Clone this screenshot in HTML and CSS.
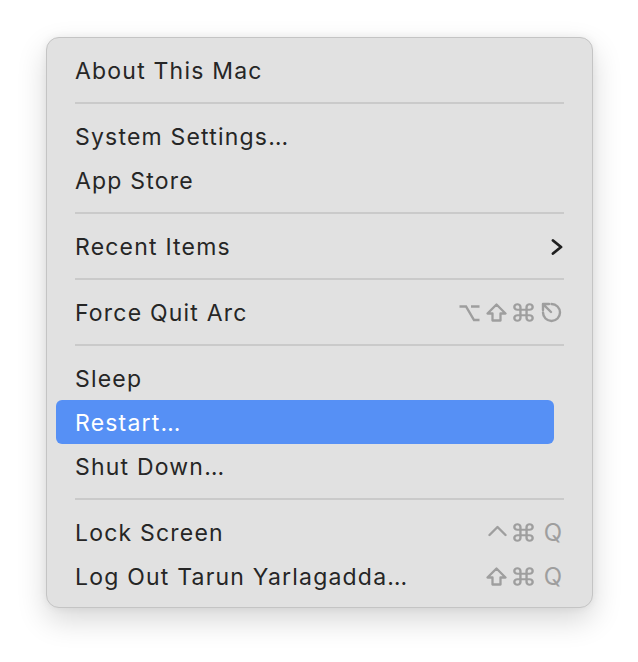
FILE: index.html
```html
<!DOCTYPE html>
<html lang="en">
<head>
<meta charset="utf-8">
<title>Apple Menu</title>
<link rel="stylesheet" href="styles.css">
</head>
<body>
<div class="menu">
  <div class="item">About This Mac</div>
  <div class="sep"></div>
  <div class="item">System Settings…</div>
  <div class="item">App Store</div>
  <div class="sep"></div>
  <div class="item">Recent Items
    <svg class="chev" width="12" height="16" viewBox="0 0 12 16"><path d="M2 1.5 L10 8 L2 14.5" fill="none" stroke="#1f1f1f" stroke-width="2.8" stroke-linecap="round" stroke-linejoin="round"/></svg>
  </div>
  <div class="sep"></div>
  <div class="item">Force Quit Arc
    <span class="keys">
      <svg class="k-opt" width="21" height="18" viewBox="0 0 21 18"><path d="M0.5 2.5 H7 L15 16 H20.5 M12 2.5 H20.5" fill="none" stroke="currentColor" stroke-width="2.4"/></svg>
      <svg class="k-shift" width="21" height="19" viewBox="0 0 21 19"><path d="M10.5 1.5 L19.5 10.5 H14.5 V17.5 H6.5 V10.5 H1.5 Z" fill="none" stroke="currentColor" stroke-width="2.3" stroke-linejoin="round"/></svg>
      <svg class="k-cmd" width="21" height="19" viewBox="1.7 1.7 20.6 20.6" preserveAspectRatio="none"><path d="M18 3a3 3 0 0 0-3 3v12a3 3 0 0 0 3 3 3 3 0 0 0 3-3 3 3 0 0 0-3-3H6a3 3 0 0 0-3 3 3 3 0 0 0 3 3 3 3 0 0 0 3-3V6a3 3 0 0 0-3-3 3 3 0 0 0-3 3 3 3 0 0 0 3 3h12a3 3 0 0 0 3-3 3 3 0 0 0-3-3z" fill="none" stroke="currentColor" stroke-width="2.3"/></svg>
      <svg class="k-esc" width="22" height="21" viewBox="0 0 22 21"><path d="M11.5 2 A8.5 8.5 0 1 1 3 10.5" fill="none" stroke="currentColor" stroke-width="2.4" stroke-linecap="round"/><path d="M3.8 2.8 L11 10 M3 8 V2 H9" fill="none" stroke="currentColor" stroke-width="2.4" stroke-linecap="round" stroke-linejoin="round"/></svg>
    </span>
  </div>
  <div class="sep"></div>
  <div class="item">Sleep</div>
  <div class="item active">Restart…</div>
  <div class="item">Shut Down…</div>
  <div class="sep"></div>
  <div class="item">Lock Screen
    <span class="keys">
      <svg class="k-ctrl" width="19" height="19" viewBox="0 0 19 19"><path d="M1.5 12 L9.5 4 L17.5 12" fill="none" stroke="currentColor" stroke-width="2.4" stroke-linecap="round" stroke-linejoin="round"/></svg>
      <svg class="k-cmd" width="21" height="19" viewBox="1.7 1.7 20.6 20.6" preserveAspectRatio="none"><path d="M18 3a3 3 0 0 0-3 3v12a3 3 0 0 0 3 3 3 3 0 0 0 3-3 3 3 0 0 0-3-3H6a3 3 0 0 0-3 3 3 3 0 0 0 3 3 3 3 0 0 0 3-3V6a3 3 0 0 0-3-3 3 3 0 0 0-3 3 3 3 0 0 0 3 3h12a3 3 0 0 0 3-3 3 3 0 0 0-3-3z" fill="none" stroke="currentColor" stroke-width="2.3"/></svg>
      <span class="q">Q</span>
    </span>
  </div>
  <div class="item">Log Out Tarun Yarlagadda…
    <span class="keys">
      <svg class="k-shift" width="21" height="19" viewBox="0 0 21 19"><path d="M10.5 1.5 L19.5 10.5 H14.5 V17.5 H6.5 V10.5 H1.5 Z" fill="none" stroke="currentColor" stroke-width="2.3" stroke-linejoin="round"/></svg>
      <svg class="k-cmd" width="21" height="19" viewBox="1.7 1.7 20.6 20.6" preserveAspectRatio="none"><path d="M18 3a3 3 0 0 0-3 3v12a3 3 0 0 0 3 3 3 3 0 0 0 3-3 3 3 0 0 0-3-3H6a3 3 0 0 0-3 3 3 3 0 0 0 3 3 3 3 0 0 0 3-3V6a3 3 0 0 0-3-3 3 3 0 0 0-3 3 3 3 0 0 0 3 3h12a3 3 0 0 0 3-3 3 3 0 0 0-3-3z" fill="none" stroke="currentColor" stroke-width="2.3"/></svg>
      <span class="q">Q</span>
    </span>
  </div>
</div>
</body>
</html>
```

FILE: styles.css
```css
html, body {
  margin: 0;
  padding: 0;
  background: #ffffff;
}

body {
  font-family: Inter, "Liberation Sans", Arial, sans-serif;
  padding: 37px 0 0 46px;
  min-height: 662px;
  box-sizing: border-box;
}

.menu {
  box-sizing: border-box;
  width: 547px;
  padding: 10px 28px 9px 9px;
  background: #e1e1e1;
  border: 1px solid #c4c4c4;
  border-radius: 13px;
  box-shadow: 0 12px 30px rgba(0, 0, 0, 0.16), 0 0 8px rgba(0, 0, 0, 0.06);
}

.item {
  height: 44px;
  display: flex;
  align-items: center;
  justify-content: space-between;
  padding: 1px 2px 0 19px;
  box-sizing: border-box;
  font-size: 23px;
  letter-spacing: 1.2px;
  color: #262626;
  white-space: nowrap;
}

.item.active {
  background: #5690f5;
  color: #ffffff;
  border-radius: 6px;
  margin-right: 10px;
}

.sep {
  height: 22px;
  display: flex;
  align-items: center;
}

.sep::after {
  content: "";
  display: block;
  height: 2px;
  margin-left: 19px;
  flex: 1;
  background: #cacaca;
}

.chev {
  margin-right: -1px;
}

.keys {
  display: flex;
  align-items: center;
  gap: 6px;
  color: #9e9e9e;
  letter-spacing: 0;
}

.keys svg {
  display: block;
}

.q {
  margin-left: 4px;
  font-size: 24px;
  color: #9e9e9e;
}
```
